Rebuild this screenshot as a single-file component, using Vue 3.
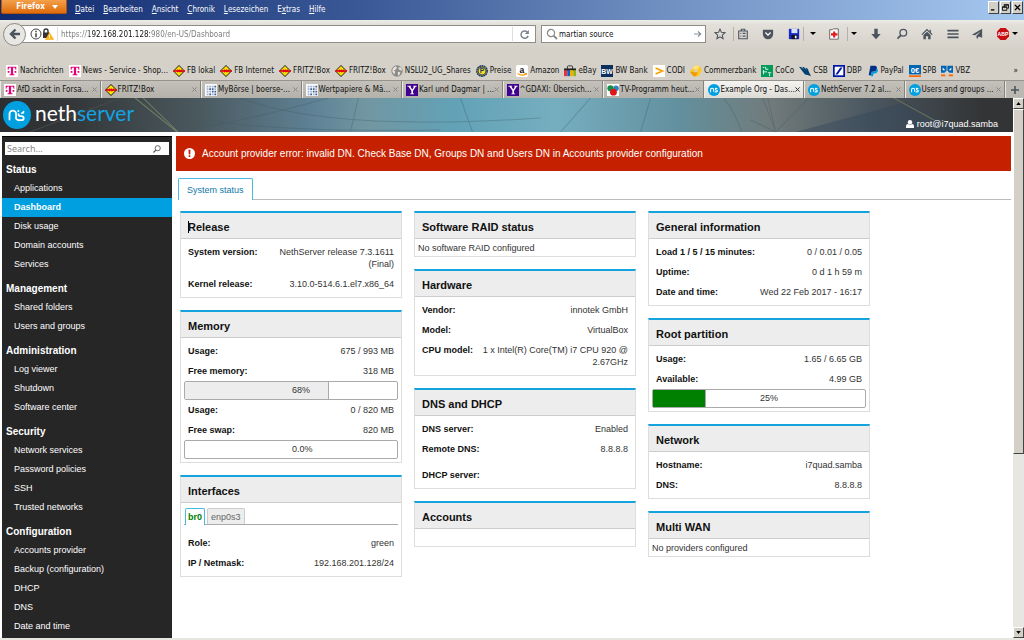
<script setup>
import { ref } from 'vue'

const icons = {
  telekom: '<path fill="#fff" d="M0 0h14v14H0z"/><path fill="#e20074" d="M2 2h10v3.6h-1V4.4Q10.400 3 8.300 3v6.800q0 1.200 1.600 1.300v1H4.100v-1q1.600-.1 1.600-1.300V3Q3.600 3 3 4.400v1.200H2zM2 7h2v2H2zM10 7h2v2h-2z"/>',
  fritz: '<path fill="#1a1a1a" d="M7 0l7 7-7 7-7-7z"/><path fill="#ffe100" d="M7 1.200l5.800 5.800L7 12.800 1.200 7z"/><path fill="#e2001a" d="M2 5.800l2 .2 1.200-1 1 1 1.300-1 1.200 1 1-1 1 1H14v1.800h-2.500l-1 1-1-1-1.500 1-1.500-1-1 1-1.500-1H0V7z"/>',
  globe: '<circle cx="7" cy="7" r="6.600" fill="#8b8b88"/><path fill="#e3e1db" d="M2 4l3-2.500 2 1L6 5 3.500 6.500 5 8l-1 3-2.500-3zM8.500 3l3-.5L13 6l-2 .5L9 5zM8 8l3 .5-1 3-2 1z"/>',
  preise: '<circle cx="7" cy="7" r="6" fill="#ffdf22" stroke="#183a6b" stroke-width="1.800" stroke-dasharray="2.200 .5"/><circle cx="7" cy="7" r="4.600" fill="#ffdf22" stroke="#183a6b"/><text x="7" y="9.700" text-anchor="middle" font-family="Liberation Sans, sans-serif" font-weight="bold" font-size="8" fill="#183a6b">P</text>',
  amazon: '<rect width="14" height="14" rx="2" fill="#fff"/><text x="7" y="9" text-anchor="middle" font-family="Liberation Sans, sans-serif" font-weight="bold" font-size="10" fill="#111">a</text><path fill="none" stroke="#f90" stroke-width="1.300" d="M2 10q5 3.500 9.500.5M10 10h2v1.800"/>',
  ebay: '<path fill="none" stroke="#222" d="M4 5V2q0-1 1-1h4q1 0 1 1v3"/><path fill="#222" d="M0 4h14v3H0z"/><path fill="#e53238" d="M0 6h4v7H0z"/><path fill="#0064d2" d="M4 6h3v7H4z"/><path fill="#f5af02" d="M7 6h4v7H7z"/><path fill="#86b817" d="M11 6h3v7h-3z"/>',
  bw: '<path fill="#0c2f5d" d="M0 0h14v14H0z"/><text x="7" y="10" text-anchor="middle" font-family="Liberation Sans, sans-serif" font-weight="bold" font-size="8" fill="#fff">BW</text>',
  codi: '<path fill="#fff" d="M0 0h14v14H0z"/><path fill="none" stroke="#ffa000" stroke-width="2" d="M3 3.500L11 7l-8 3.500"/>',
  commerz: '<path fill="#ffc71f" d="M5 1h6l3 5-4 7H4L0 8z"/><path fill="#ef9b00" d="M0 8h9l-2 5H4z"/><path fill="#ffe485" d="M5 1h6L9 5H3z"/><path fill="#d5d1c9" d="M5.500 5.500h4L8 8.500H4.500z"/>',
  coco: '<path fill="#009a5b" d="M0 0h14v14H0z"/><path stroke="#fff" stroke-width="1" fill="none" d="M2 3h2M5.500 2v3h3M3 6v5M2 8h5M8 9h4M10 10v3"/>',
  csb: '<path fill="#00406f" d="M0 2q4 0 6 4L4 2q4 1 5 5L8 3q3 1 3.500 5L14 13q-4-2-7-2z"/>',
  db: '<path fill="#0018a8" d="M0 0h14v14H0z"/><path fill="#fff" d="M2 2h10v10H2z"/><path fill="#0018a8" d="M8.500 3h2.700L5.500 11H2.800z"/>',
  paypal: '<path fill="#003087" d="M4 1h5q3 0 2.500 3.500T7 8H5.500L5 12H2z"/><path fill="#009cde" d="M11.500 4q2 1 1 3.500T9 10H7.500L7 13H4.500L5.500 8H7q4 0 4.500-4z"/>',
  spb: '<path fill="#0066b3" d="M0 0h14v11H0z"/><path fill="#f60" d="M0 12h14v2H0z"/><text x="7" y="9" text-anchor="middle" font-family="Liberation Sans, sans-serif" font-weight="bold" font-size="9" fill="#fff">0€</text>',
  vbz: '<path fill="#0066b3" d="M0 1h6.500v5h1V1H14v8h-4L7 6 4 9H0z"/><path fill="#fff" d="M2 3l3 3H2zM12 3L9 6h3z"/><path fill="#f60" d="M0 11h5v2H0zM9 11h5v2H9z"/>',
  boerse: '<path fill="#f8fafc" d="M0 0h14v14H0z"/><g fill="#9eb2cf"><path d="M2 2h2v2H2zM5 2h2v2H5zM8 2h2v2H8zM2 5h2v2H2zM5 8h2v2H5zM2 8h2v2H2zM2 11h2v2H2zM8 11h2v2H8zM11 5h2v2h-2z"/></g><g fill="#3d5f93"><path d="M11 2h2v2h-2zM5 5h2v2H5zM8 5h2v2H8zM8 8h2v2H8zM11 8h2v2h-2zM5 11h2v2H5zM11 11h2v2h-2z"/></g>',
  yahoo: '<path fill="#400090" d="M0 0h14v14H0z"/><path fill="#fff" d="M1.500 2h4.500v1H5L7.300 6.500 9.500 3H8.300V2h4.200v1h-1L8.200 8v3h1.300v1H5V11h1.300V8L2.800 3H1.500z"/>',
  tv: '<path fill="#fff" d="M0 0h14v14H0z"/><circle cx="4" cy="5" r="3.600" fill="#138f45"/><circle cx="10.500" cy="5" r="3.300" fill="#3284bc"/><circle cx="7.500" cy="9.500" r="4" fill="#e0161b"/>',
  ns: '<circle cx="7" cy="7" r="7" fill="#00a0e0"/><path fill="none" stroke="#fff" stroke-width="1.200" d="M3 9.500V7q0-2 1.800-2t1.800 2v2M11 5.500q-2.500-1-2.500.4t2.300 1.700q.5 2-3 1.500"/>',
}

const menus = [
  ['', 'D', 'atei'], ['', 'B', 'earbeiten'], ['', 'A', 'nsicht'], ['', 'C', 'hronik'],
  ['', 'L', 'esezeichen'], ['E', 'x', 'tras'], ['', 'H', 'ilfe'],
]
const bookmarks = [
  ['telekom', 'Nachrichten'], ['telekom', 'News - Service - Shop...'], ['fritz', 'FB lokal'],
  ['fritz', 'FB Internet'], ['fritz', 'FRITZ!Box'], ['fritz', 'FRITZ!Box'], ['globe', 'NSLU2_UG_Shares'],
  ['preise', 'Preise'], ['amazon', 'Amazon'], ['ebay', 'eBay'], ['bw', 'BW Bank'], ['codi', 'CODI'],
  ['commerz', 'Commerzbank'], ['coco', 'CoCo'], ['csb', 'CSB'], ['db', 'DBP'], ['paypal', 'PayPal'],
  ['spb', 'SPB'], ['vbz', 'VBZ'],
]
const tabs = [
  ['telekom', 'AfD sackt in Forsa...'], ['fritz', 'FRITZ!Box'], ['boerse', 'MyBörse | boerse-...'],
  ['boerse', 'Wertpapiere & Mä...'], ['yahoo', 'Karl und Dagmar | ...'], ['yahoo', '^GDAXI: Übersich...'],
  ['tv', 'TV-Programm heut...'], ['ns', 'Example Org - Das...'], ['ns', 'NethServer 7.2 al...'],
  ['ns', 'Users and groups ...'],
]
const activeTab = ref(7)

const sections = [
  { title: 'Status', items: ['Applications', 'Dashboard', 'Disk usage', 'Domain accounts', 'Services'] },
  { title: 'Management', items: ['Shared folders', 'Users and groups'] },
  { title: 'Administration', items: ['Log viewer', 'Shutdown', 'Software center'] },
  { title: 'Security', items: ['Network services', 'Password policies', 'SSH', 'Trusted networks'] },
  { title: 'Configuration', items: ['Accounts provider', 'Backup (configuration)', 'DHCP', 'DNS', 'Date and time'] },
]

const columns = [
  [
    { title: 'Release', caret: true, blocks: [{ rows: [['System version:', 'NethServer release 7.3.1611 (Final)'], ['Kernel release:', '3.10.0-514.6.1.el7.x86_64']] }] },
    { title: 'Memory', blocks: [
      { rows: [['Usage:', '675 / 993 MB'], ['Free memory:', '318 MB']] }, { bar: 68, label: '68%' },
      { rows: [['Usage:', '0 / 820 MB'], ['Free swap:', '820 MB']] }, { bar: 0, label: '0.0%' },
    ] },
    { title: 'Interfaces', blocks: [{ tabs: ['br0', 'enp0s3'] }, { rows: [['Role:', 'green'], ['IP / Netmask:', '192.168.201.128/24']] }] },
  ],
  [
    { title: 'Software RAID status', note: 'No software RAID configured' },
    { title: 'Hardware', blocks: [{ rows: [['Vendor:', 'innotek GmbH'], ['Model:', 'VirtualBox'], ['CPU model:', '1 x Intel(R) Core(TM) i7 CPU 920 @ 2.67GHz']] }] },
    { title: 'DNS and DHCP', blocks: [{ rows: [['DNS server:', 'Enabled'], ['Remote DNS:', '8.8.8.8']] }, { gap: true, rows: [['DHCP server:', '']] }] },
    { title: 'Accounts', note: '' },
  ],
  [
    { title: 'General information', blocks: [{ rows: [['Load 1 / 5 / 15 minutes:', '0 / 0.01 / 0.05'], ['Uptime:', '0 d 1 h 59 m'], ['Date and time:', 'Wed 22 Feb 2017 - 16:17']] }] },
    { title: 'Root partition', blocks: [{ rows: [['Usage:', '1.65 / 6.65 GB'], ['Available:', '4.99 GB']] }, { bar: 25, label: '25%', green: true }] },
    { title: 'Network', blocks: [{ rows: [['Hostname:', 'i7quad.samba'], ['DNS:', '8.8.8.8']] }] },
    { title: 'Multi WAN', note: 'No providers configured' },
  ],
]
const url = ref('https://192.168.201.128:980/en-US/Dashboard')
const query = ref('martian source')
</script>

<template>
  <div class="window">
    <header class="titlebar">
      <button class="firefox">Firefox <svg viewBox="0 0 6 4" width="6" height="4"><path d="M0 0h6L3 4z" fill="#fff" /></svg></button>
      <nav class="menus">
        <button v-for="m in menus" :key="m[2]">{{ m[0] }}<u>{{ m[1] }}</u>{{ m[2] }}</button>
      </nav>
      <div class="controls">
        <button aria-label="Minimize"><svg viewBox="0 0 8 8"><path d="M1 6h4v1.500H1z" /></svg></button>
        <button aria-label="Restore"><svg viewBox="0 0 8 8"><path d="M2.500 3V.8h5v4H6M2.500 1.300h5M.5 3.200h5v4h-5zM.5 3.700h5" fill="none" stroke="#000" /></svg></button>
        <button aria-label="Close"><svg viewBox="0 0 8 8"><path d="M1 1l6 6M7 1L1 7" stroke="#000" stroke-width="1.600" /></svg></button>
      </div>
    </header>

    <div class="navbar">
      <button class="back" aria-label="Back"><svg viewBox="0 0 12 12" width="12" height="12"><path d="M6.500 1.500L2 6l4.500 4.500M2.500 6H11" fill="none" stroke="#4b545e" stroke-width="2.400" /></svg></button>
      <div class="field address">
        <svg viewBox="0 0 12 12" width="12" height="12"><circle cx="6" cy="6" r="5" fill="none" stroke="#444" /><path d="M5.300 2.800h1.400v1.400H5.300zM5.300 5.200h1.400v4H5.300z" fill="#333" /></svg>
        <svg viewBox="0 0 12 12" width="12" height="12"><path d="M2 5V3q0-2 2-2t2 2v2" fill="none" stroke="#333" stroke-width="1.400" /><path d="M1 4.500h6V10H1z" fill="#333" /><path d="M7.500 4.500l4 7h-8z" fill="#fdb614" stroke="#f3a200" stroke-width=".5" /><path d="M7.100 6.800h.9V9h-.9zM7.100 9.600h.9v.9h-.9z" fill="#fff" /></svg>
        <input v-model="url" class="url" aria-label="Address" spellcheck="false">
        <button class="reload" aria-label="Reload"><svg viewBox="0 0 12 12" width="11" height="11"><path d="M9.500 3.800A4 4 0 1 0 10 7.500" fill="none" stroke="#7b838f" stroke-width="1.600" /><path d="M10.800 1v4.500H6.300z" fill="#7b838f" /></svg></button>
      </div>
      <div class="field search">
        <svg viewBox="0 0 12 12" width="12" height="12"><circle cx="5" cy="5" r="3.600" fill="none" stroke="#888" stroke-width="1.200" /><path d="M7.600 7.600l3.400 3.400" stroke="#888" stroke-width="1.800" /></svg>
        <input v-model="query" aria-label="Web search" spellcheck="false">
        <svg viewBox="0 0 8 8" width="8" height="8"><path d="M0 4h6M4 1.500L6.700 4 4 6.500" fill="none" stroke="#8b929b" stroke-width="1.200" /></svg>
      </div>
      <div class="tools">
        <button class="w26" aria-label="Bookmark"><svg viewBox="0 0 14 14"><path d="M7 1.300l1.700 3.800 4.100.4-3.100 2.800.9 4.100L7 10.300l-3.600 2.100.9-4.100-3.100-2.800 4.100-.4z" fill="none" stroke="#4b545e" stroke-width="1.200" /></svg></button>
        <button class="w18 line" aria-label="Bookmark list"><svg viewBox="0 0 14 14"><path d="M2 3.500h10v9H2zM5 3.500V1.500h4v2M4 6.300h1M6.500 6.300H10M4 9.500h1M6.500 9.500H10" fill="none" stroke="#4b545e" stroke-width="1.300" /></svg></button>
        <button class="w34" aria-label="Pocket"><svg viewBox="0 0 14 14"><path d="M1 2h12v5a6 6 0 0 1-12 0z" fill="#4b545e" /><path d="M4 5.300l3 3 3-3" fill="none" stroke="#fff" stroke-width="1.500" /></svg></button>
        <button class="w18" aria-label="Save"><svg viewBox="0 0 14 14"><path d="M1 1h12v12H1z" fill="#1229c8" /><path d="M4 1h7v5H4z" fill="#d8e3fa" /><path d="M4 8h7v5H4z" fill="#112" /><path d="M8 9h2v3H8z" fill="#fff" /></svg></button>
        <button class="w18 line" aria-label="Save options"><svg class="caret" viewBox="0 0 6 4"><path d="M0 0h6L3 3z" /></svg></button>
        <button class="w26" aria-label="Add"><svg viewBox="0 0 14 14"><path d="M2 2h3l1-1h6v12H2z" fill="#fff" stroke="#555" /><path d="M6 4h2.500v2.200H11v2.600H8.500V11H6V8.800H3.500V6.200H6z" fill="#e4181b" /></svg></button>
        <button class="w12 line" aria-label="Add options"><svg class="caret" viewBox="0 0 6 4"><path d="M0 0h6L3 3z" /></svg></button>
        <button class="w34" aria-label="Downloads"><svg viewBox="0 0 14 14"><path d="M5 1h4v6h3.500L7 13 1.500 7H5z" fill="#4b545e" /></svg></button>
        <button class="w18" aria-label="Find"><svg viewBox="0 0 14 14"><circle cx="8.500" cy="5.500" r="3.900" fill="none" stroke="#4b545e" stroke-width="1.500" /><path d="M5.800 8.300L1.800 12.300" stroke="#4b545e" stroke-width="2" /></svg></button>
        <button class="w32" aria-label="Home"><svg viewBox="0 0 14 14"><path d="M7 1L.5 7.200l1 1L7 3l5.500 5.200 1-1L11.500 5.300V2H10v2z" fill="#4b545e" /><path d="M2.800 8.300L7 4.300l4.200 4V13H8.300V9.500H5.700V13H2.800z" fill="#4b545e" /></svg></button>
        <button class="w20" aria-label="Menu"><svg viewBox="0 0 14 14"><path d="M.5 3h13M.5 7h13M.5 11h13" stroke="#4b545e" stroke-width="2" /></svg></button>
        <button class="w28" aria-label="Send"><svg viewBox="0 0 14 14"><path d="M13 1v10.500L9 10l-2 3-.8-3.800L11 4 4.800 8.500 1 8z" fill="#4b545e" /></svg></button>
        <button class="abp" aria-label="Adblock Plus"><svg viewBox="0 0 14 14"><path d="M4 0h6l4 4v6l-4 4H4l-4-4V4z" fill="#c70d12" /><text x="7" y="9.300" text-anchor="middle" font-family="Liberation Sans, sans-serif" font-size="6" font-weight="bold" fill="#fff">ABP</text></svg><svg class="caret" viewBox="0 0 6 4"><path d="M0 0h6L3 3z" /></svg></button>
      </div>
    </div>

    <nav class="bookmarks">
      <a v-for="(b, i) in bookmarks" :key="i" href="#"><svg viewBox="0 0 14 14" width="12" height="12" v-html="icons[b[0]]" />{{ b[1] }}</a>
      <button class="more" aria-label="More bookmarks">»</button>
    </nav>

    <div class="tabs">
      <div v-for="(t, i) in tabs" :key="i" class="tab" :class="{ active: activeTab === i }">
        <button class="pick" @click="activeTab = i"><svg viewBox="0 0 14 14" width="12" height="12" v-html="icons[t[0]]" /><span>{{ t[1] }}</span></button>
        <button class="close" aria-label="Close tab"><svg viewBox="0 0 6 6" width="5" height="5"><path d="M.5 .5l5 5M5.500 .5l-5 5" stroke="currentColor" stroke-width="1.200" /></svg></button>
      </div>
      <button class="new" aria-label="New tab"><svg viewBox="0 0 8 8" width="8" height="8"><path d="M4 0v8M0 4h8" stroke="#4b545e" stroke-width="1.600" /></svg></button>
    </div>

    <div class="viewport">
      <div class="page">
        <div class="banner">
          <svg class="lines" viewBox="0 0 1012 34" preserveAspectRatio="none" fill="none">
            <path d="M30 34L120 0" stroke="#444b45" /><path d="M135 0l42 34M143 0l35 34" stroke="#6f7f63" />
            <path d="M178 34q80-14 150-34M210 22q60 12 230 10M240 0q90 34 300 20M350 34l8-34M460 0l12 34M560 34l30-34M640 34l10-34M723 0q12 15 18 34M767 0l8 34 33-34M762 0l13 34-25-12" stroke="#3f5b66" stroke-opacity=".35" />
            <path d="M795 34L905 4l60 30z" fill="#36485a" fill-opacity=".45" /><path d="M893 0l40 22" stroke="#6a6f53" />
          </svg>
          <a class="brand" href="#">
            <svg viewBox="0 0 28 28" width="28" height="28"><circle cx="14" cy="14" r="14" fill="#00a0e0" /><g fill="none" stroke="#fff" stroke-width="1.800" stroke-linecap="round"><path d="M6.500 18.500V13a3.300 3.300 0 0 1 6.600 0v4.200" /><path d="M13.100 17.200q.4 2.300 3.600 2h1.600q2.400 0 2.400-2t-2.400-2h-.8q-2-.2-2-2" /><path d="M15.300 10h.1M20.500 10.700v.4q0 1-1.600 1" /></g></svg>
            <span>neth<b>server</b></span>
          </a>
          <a class="user" href="#"><svg viewBox="0 0 8 8" width="8" height="8"><circle cx="4" cy="2.300" r="2.200" fill="#fff" /><path d="M0 8V6.200Q0 4 2 4q2 1.300 4 0 2 0 2 2.200V8z" fill="#fff" /></svg>root@i7quad.samba</a>
        </div>

        <div class="body">
          <aside class="sidebar">
            <div class="find">
              <input type="search" placeholder="Search..." aria-label="Search">
              <svg viewBox="0 0 9 9" width="8" height="8"><circle cx="5.300" cy="3.600" r="2.900" fill="none" stroke="#555" /><path d="M3.200 5.700L.5 8.400" stroke="#555" stroke-width="1.400" /></svg>
            </div>
            <nav>
              <section v-for="s in sections" :key="s.title">
                <h3>{{ s.title }}</h3>
                <a v-for="i in s.items" :key="i" href="#" :class="{ active: i === 'Dashboard' }">{{ i }}</a>
              </section>
            </nav>
          </aside>

          <main class="main">
            <div class="alert" role="alert">
              <svg viewBox="0 0 12 12" width="11" height="11"><circle cx="6" cy="6" r="6" fill="#fff" /><path d="M4.900 2h2.200L6.800 7H5.200zM5.100 8h1.800v1.800H5.100z" fill="#c52100" /></svg>
              Account provider error: invalid DN. Check Base DN, Groups DN and Users DN in Accounts provider configuration
            </div>
            <div class="pagetabs"><button>System status</button></div>
            <div class="columns">
              <div v-for="(col, c) in columns" :key="c" class="column">
                <section v-for="card in col" :key="card.title" class="card">
                  <h2 :class="{ cursor: card.caret }">{{ card.title }}</h2>
                  <p v-if="card.note !== undefined" class="note">{{ card.note }}</p>
                  <div v-else class="content">
                    <template v-for="(b, n) in card.blocks" :key="n">
                      <div v-if="b.tabs" class="iftabs"><button v-for="(t, k) in b.tabs" :key="t" :class="{ on: k === 0 }">{{ t }}</button></div>
                      <div v-else-if="b.label" class="bar" :class="{ green: b.green }" role="progressbar" :aria-valuenow="b.bar">
                        <div v-if="b.bar" class="fill" :style="{ width: b.bar + '%' }" /><span>{{ b.label }}</span>
                      </div>
                      <dl v-else :class="{ gap: b.gap }">
                        <div v-for="r in b.rows" :key="r[0]"><dt>{{ r[0] }}</dt><dd>{{ r[1] }}</dd></div>
                      </dl>
                    </template>
                  </div>
                </section>
              </div>
            </div>
          </main>
        </div>
      </div>
      <div class="scrollbar">
        <button aria-label="Scroll up"><svg viewBox="0 0 6 4" width="5" height="3"><path d="M0 4h6L3 0z" /></svg></button>
        <div class="thumb" /><div class="track" />
        <button aria-label="Scroll down"><svg viewBox="0 0 6 4" width="5" height="3"><path d="M0 0h6L3 4z" /></svg></button>
      </div>
    </div>
  </div>
</template>

<style>
body { background: #e8e6e0; }
</style>

<style scoped>
* { box-sizing: border-box; }
.window { min-height: 100vh; display: flex; flex-direction: column; padding-bottom: 2px; font: 8px/12px "DejaVu Sans Condensed", "DejaVu Sans", sans-serif; color: #111; background: #e8e6e0; }
button, input { font: inherit; color: inherit; border: 0; padding: 0; margin: 0; background: none; outline: 0; }
button { display: flex; align-items: center; justify-content: center; white-space: nowrap; }
a { color: inherit; text-decoration: none; }
svg { flex: none; display: block; }

.titlebar { height: 20px; display: flex; align-items: flex-start; background: linear-gradient(90deg, #102a6f, #3a5896 35%, #7090c2 65%, #a5c8f0); }
.firefox { width: 66px; height: 14px; margin-left: 1px; padding-left: 6px; gap: 7px; color: #fff; font-weight: bold; background: linear-gradient(#f3a04a, #e06c0c); border: 1px solid #b3560e; border-top: 0; border-radius: 0 0 2px 2px; }
.menus { display: flex; gap: 9px; height: 20px; margin-left: 8px; color: #fff; }
.controls { margin: 1px 1px 0 auto; display: flex; gap: 1px; }
.controls button { width: 11px; height: 13px; background: #d4d0c8; border: 1px solid; border-color: #fff #404040 #404040 #fff; }
.controls svg { width: 7px; height: 7px; }

.navbar { height: 28px; display: flex; align-items: center; background: linear-gradient(#efedea 0, #e3e0da 4px, #d6d2ca); }
.back { width: 23px; height: 23px; margin: 0 -5px 0 3px; border: 1px solid #8b8984; border-radius: 50%; background: #e9e7e3; z-index: 1; }
.field { height: 18px; display: flex; align-items: center; background: #fff; border: 1px solid #8f8d88; }
.field input { flex: 1; min-width: 0; height: 14px; }
.address { flex: 1; padding-left: 8px; }
.field .url { margin-left: 3px; padding-left: 3px; color: transparent; border-left: 1px solid #ddd; background: linear-gradient(90deg, #777 31px, #111 31px 92px, #777 92px) text; }
.reload { width: 23px; height: 14px; border-left: 1px solid #ddd; }
.search { width: 165px; margin-left: 5px; padding: 0 3px 0 4px; gap: 1px; }
.tools { display: flex; width: 318px; padding-left: 1px; }
.tools button { height: 14px; flex: none; }
.tools svg { width: 12px; height: 12px; }
.tools .caret { width: 6px; height: 4px; }
.line { border-left: 1px solid #b5b1a9; }
.w12 { width: 12px; } .w18 { width: 18px; } .w20 { width: 20px; } .w26 { width: 26px; }
.w28 { width: 28px; } .w32 { width: 32px; } .w34 { width: 34px; }
.abp { width: 33px; gap: 3px; }

.bookmarks { height: 32px; padding: 14px 6px 0 6px; display: flex; align-items: center; gap: 5px; background: #d5d1c9; white-space: nowrap; overflow: hidden; }
.bookmarks a { display: flex; align-items: center; gap: 2px; }
.more { margin-left: auto; }

.tabs { height: 18px; display: flex; background: #bbb8b1; border-top: 1px solid #96938d; }
.tab { flex: 1; min-width: 0; display: flex; align-items: center; padding: 0 3px; border-left: 1px solid #eceae6; border-right: 1px solid #85827c; background: linear-gradient(#c4c1ba, #b4b1aa); }
.tab.active { background: linear-gradient(#f5f4f1, #dedbd5); }
.pick { flex: 1; min-width: 0; gap: 1px; justify-content: flex-start; }
.close { color: #888; }
.active .close { color: #333; }
.new { width: 19px; border-left: 1px solid #e8e6e0; }

.viewport { flex: 1; display: flex; background: #fff; }
.page { flex: 1; min-width: 0; font: 9px/12px "Liberation Sans", Arial, sans-serif; color: #333; }
.banner { height: 34px; position: relative; display: flex; align-items: center; justify-content: space-between; background: linear-gradient(90deg, #2c2d2f 0, #35393b 8%, #4b5a60 20%, #5f8296 31%, #7296a1 36%, #62a2b7 45%, #76aebf 55%, #62909e 67%, #717b7b 76%, #4a565f 86%, #333435 97%); overflow: hidden; }
.lines { position: absolute; inset: 0; width: 100%; height: 100%; }
.brand { position: relative; display: flex; align-items: center; gap: 4px; padding-left: 3px; color: #fff; font: 21px/28px Lato, sans-serif; }
.brand span { padding-bottom: 4px; }
.brand b { font-weight: 400; color: #12a3e3; }
.user { position: relative; display: flex; align-items: center; gap: 3px; padding: 17px 15px 0 0; color: #fff; }
.body { display: flex; align-items: flex-start; gap: 4px; padding: 4px 2px 0; }
.sidebar { width: 170px; flex: none; padding: 5px 0 2px; background: #262626; color: #fff; border-top: 1px solid #000; }
.find { display: flex; align-items: center; height: 13px; margin: 0 3px; padding: 0 8px 0 2px; background: #fff; }
.find input { flex: 1; min-width: 0; height: 13px; color: #333; appearance: none; font-family: "Noto Sans", sans-serif; }
.find input::placeholder { color: #888; }
.sidebar section { padding-top: 5px; }
.sidebar h3 { margin: 0; padding-left: 4px; font-size: 10px; line-height: 19px; }
.sidebar a { display: block; padding-left: 12px; line-height: 19px; }
.sidebar a.active { background: #00a0e0; font-weight: bold; }

.main { flex: 1; min-width: 0; }
.alert { height: 35px; display: flex; align-items: center; gap: 7px; padding-left: 8px; color: #fff; font-size: 10px; background: #c52100; }
.pagetabs { display: flex; height: 22px; margin: 7px 0 0 2px; border-bottom: 1px solid #bbb; }
.pagetabs button { height: 22px; padding: 0 8px; color: #0f78a8; background: #fff; border: 1px solid #4ab8e4; border-bottom: 0; border-radius: 2px 2px 0 0; }
.columns { display: flex; gap: 12px; padding: 11px 4px; }
.column { width: 222px; display: flex; flex-direction: column; gap: 12px; }
.card { border: 1px solid #ddd; border-top: 2px solid #14a3dd; }
.card h2 { margin: 0; padding: 3px 7px 0; font-size: 11px; line-height: 22px; color: #111; background: #ededed; border-bottom: 1px solid #ccc; }
.cursor::before { content: ""; display: inline-block; width: 1px; height: 12px; margin-right: -1px; vertical-align: -2px; background: #000; }
.note { margin: 0; min-height: 17px; padding: 3px 3px 2px; }
.content { padding: 3px 3px; }
dl { margin: 0; }
dl div { display: flex; justify-content: space-between; padding: 4px; }
dl.gap { padding-top: 6px; }
dt { flex: none; font-weight: bold; color: #111; }
dd { margin: 0; max-width: 150px; text-align: right; }
.bar { position: relative; height: 19px; border: 1px solid #aaa; border-radius: 2px; padding-left: 50%; line-height: 17px; }
.bar span { position: relative; }
.fill { position: absolute; left: 0; top: 0; bottom: 0; background: #ededed; border-right: 1px solid #aaa; }
.green .fill { background: #008000; }
.iftabs { display: flex; gap: 2px; margin: 2px 0 8px; padding-left: 1px; height: 17px; border-bottom: 1px solid #aaa; }
.iftabs button { height: 16px; padding: 0 3px; color: #666; background: #ededed; border: 1px solid #ccc; border-bottom: 0; border-radius: 2px 2px 0 0; }
.iftabs .on { height: 17px; padding: 0 2px; color: #008000; font-weight: bold; background: #fff; border-color: #4ab8e4; }

.scrollbar { width: 11px; flex: none; display: flex; flex-direction: column; background: #e8e6e0; }
.scrollbar button { height: 11px; background: #d4d0c8; border: 1px solid; border-color: #fff #444 #444 #fff; }
.thumb { flex: 344; background: #d4d0c8; border: 1px solid; border-color: #fff #444 #444 #fff; }
.track { flex: 174; }
</style>
